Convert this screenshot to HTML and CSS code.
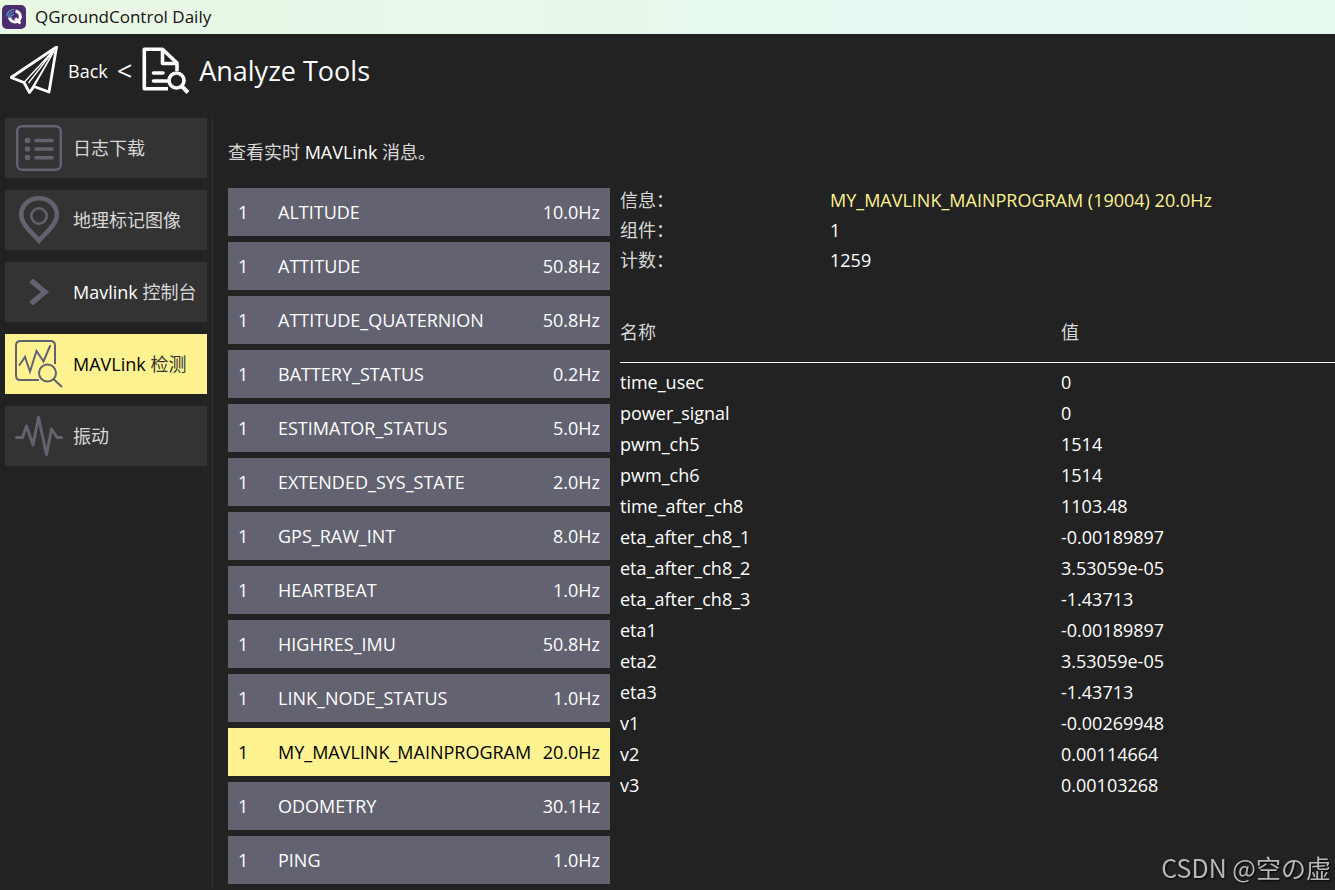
FILE: index.html
```
<!DOCTYPE html>
<html lang="zh-CN">
<head>
<meta charset="utf-8">
<title>QGroundControl Daily</title>
<link rel="stylesheet" href="styles.css">
</head>
<body>
<div class="titlebar">
  <svg class="app-logo" viewBox="0 0 24 24" aria-hidden="true">
    <rect width="24" height="24" rx="5" fill="#4c2d6d"/>
    <path d="M13.500 6.200A5.400 5.400 0 1 1 7.600 12.500" fill="none" stroke="#fff" stroke-width="3.200"/>
    <path d="M13.200 13.200l5.200 5.200" stroke="#fff" stroke-width="2.800"/>
    <path d="M4.500 11.500A7.500 7.500 0 0 1 12 4.500M6.700 12A5 5 0 0 1 12 7M8.800 12.500A3 3 0 0 1 12 9.500" fill="none" stroke="#4da3d6" stroke-width="1.200"/>
  </svg>
  <span>QGroundControl Daily</span>
</div>
<header class="toolbar">
  <button class="back" type="button">
    <svg class="plane" viewBox="0 0 50 50" aria-hidden="true">
      <path d="M46.500 1L1 31.500L14 36.500L19.500 46.500L24 40.500L39 46L46.500 1Z" fill="none" stroke="#fff" stroke-width="2.800" stroke-linejoin="round"/>
      <path d="M46.500 1L14 36.500M46.500 1L19.500 46M46.500 1L24 40.500M46.500 1L18.500 37" fill="none" stroke="#fff" stroke-width="1.300"/>
    </svg>
    <span>Back</span>
  </button>
  <span class="chevron">&lt;</span>
  <svg class="doc" viewBox="0 0 48 48" aria-hidden="true">
    <g fill="none" stroke="#fff" stroke-width="3.600" stroke-linejoin="round">
      <path d="M26 41.700H2.300V2.300H20.500L35 16V24M20.500 2.300V16.500H34"/>
      <path d="M11.500 26H21M11.500 34H25" stroke-linecap="round"/>
      <circle cx="34.500" cy="33.500" r="7.500"/>
      <path d="M39.500 39L46 45.500" stroke-width="4"/>
    </g>
  </svg>
  <h1>Analyze Tools</h1>
</header>
<div class="workspace">
  <nav class="sidebar">
    <button class="tool" type="button">
      <svg viewBox="0 0 48 48" aria-hidden="true">
        <rect x="2.200" y="2.200" width="43.600" height="43.600" rx="5" fill="none" stroke="currentColor" stroke-width="2.400"/>
        <path d="M19.500 16.500H38.500M19.500 25H38.500M19.500 33.700H38.500" stroke="currentColor" stroke-width="3.600"/>
        <g fill="currentColor"><circle cx="12.500" cy="16.500" r="2.800"/><circle cx="12.500" cy="25" r="2.800"/><circle cx="12.500" cy="33.500" r="2.800"/></g>
      </svg>
      <span class="han">日志下载</span>
    </button>
    <button class="tool" type="button">
      <svg viewBox="0 0 48 48" aria-hidden="true">
        <path d="M24 44.500C19 38.500 6.200 29 6.200 18.500A17.800 16.200 0 0 1 41.800 18.500C41.800 29 29 38.500 24 44.500Z" fill="none" stroke="currentColor" stroke-width="4.600"/>
        <circle cx="24" cy="20" r="7.700" fill="none" stroke="currentColor" stroke-width="2.600"/>
      </svg>
      <span class="han">地理标记图像</span>
    </button>
    <button class="tool" type="button">
      <svg viewBox="0 0 48 48" aria-hidden="true">
        <path d="M16 12.500L30 24L16 35.500" fill="none" stroke="currentColor" stroke-width="5.200"/>
      </svg>
      <span>Mavlink <span class="han">控制台</span></span>
    </button>
    <button class="tool active" type="button" aria-current="page">
      <svg viewBox="0 0 48 48" aria-hidden="true">
        <g fill="none" stroke="currentColor" stroke-width="2">
          <path d="M40 24V5.500Q40 1 35.500 1H5.500Q1 1 1 5.500V35.500Q1 40 5.500 40H24"/>
          <path d="M4.500 25L10 17L15 31.500L21.500 11L28.500 21.500L35 6" stroke-linecap="round"/>
          <circle cx="32.500" cy="33" r="8.500"/>
          <path d="M38.500 39L47 47"/>
        </g>
      </svg>
      <span>MAVLink <span class="han">检测</span></span>
    </button>
    <button class="tool" type="button">
      <svg viewBox="0 0 48 48" aria-hidden="true">
        <path d="M1.500 25.500H7.500L11.500 14L18 33L23.500 5.500L31.500 42.500L36.500 17L42 25.500H46.500" fill="none" stroke="currentColor" stroke-width="3" stroke-linecap="round" stroke-linejoin="round"/>
      </svg>
      <span class="han">振动</span>
    </button>
  </nav>
  <main class="inspector">
    <p class="intro"><span class="han">查看实时</span> MAVLink <span class="han">消息。</span></p>
    <div class="panes">
      <div class="messages">
        <button class="message" type="button"><span>1</span><span>ALTITUDE</span><span>10.0Hz</span></button>
        <button class="message" type="button"><span>1</span><span>ATTITUDE</span><span>50.8Hz</span></button>
        <button class="message" type="button"><span>1</span><span>ATTITUDE_QUATERNION</span><span>50.8Hz</span></button>
        <button class="message" type="button"><span>1</span><span>BATTERY_STATUS</span><span>0.2Hz</span></button>
        <button class="message" type="button"><span>1</span><span>ESTIMATOR_STATUS</span><span>5.0Hz</span></button>
        <button class="message" type="button"><span>1</span><span>EXTENDED_SYS_STATE</span><span>2.0Hz</span></button>
        <button class="message" type="button"><span>1</span><span>GPS_RAW_INT</span><span>8.0Hz</span></button>
        <button class="message" type="button"><span>1</span><span>HEARTBEAT</span><span>1.0Hz</span></button>
        <button class="message" type="button"><span>1</span><span>HIGHRES_IMU</span><span>50.8Hz</span></button>
        <button class="message" type="button"><span>1</span><span>LINK_NODE_STATUS</span><span>1.0Hz</span></button>
        <button class="message active" type="button"><span>1</span><span>MY_MAVLINK_MAINPROGRAM</span><span>20.0Hz</span></button>
        <button class="message" type="button"><span>1</span><span>ODOMETRY</span><span>30.1Hz</span></button>
        <button class="message" type="button"><span>1</span><span>PING</span><span>1.0Hz</span></button>
      </div>
      <section class="details">
        <dl class="summary">
          <dt class="han">信息：</dt><dd class="highlight">MY_MAVLINK_MAINPROGRAM (19004) 20.0Hz</dd>
          <dt class="han">组件：</dt><dd>1</dd>
          <dt class="han">计数：</dt><dd>1259</dd>
        </dl>
        <table class="fields">
          <thead><tr><th class="han" scope="col">名称</th><th class="han" scope="col">值</th></tr></thead>
          <tbody>
            <tr><td>time_usec</td><td>0</td></tr>
            <tr><td>power_signal</td><td>0</td></tr>
            <tr><td>pwm_ch5</td><td>1514</td></tr>
            <tr><td>pwm_ch6</td><td>1514</td></tr>
            <tr><td>time_after_ch8</td><td>1103.48</td></tr>
            <tr><td>eta_after_ch8_1</td><td>-0.00189897</td></tr>
            <tr><td>eta_after_ch8_2</td><td>3.53059e-05</td></tr>
            <tr><td>eta_after_ch8_3</td><td>-1.43713</td></tr>
            <tr><td>eta1</td><td>-0.00189897</td></tr>
            <tr><td>eta2</td><td>3.53059e-05</td></tr>
            <tr><td>eta3</td><td>-1.43713</td></tr>
            <tr><td>v1</td><td>-0.00269948</td></tr>
            <tr><td>v2</td><td>0.00114664</td></tr>
            <tr><td>v3</td><td>0.00103268</td></tr>
          </tbody>
        </table>
      </section>
    </div>
  </main>
</div>
<div class="watermark">CSDN @空の虚</div>
</body>
</html>
```
FILE: styles.css
```
* {
  box-sizing: border-box;
}

body {
  margin: 0;
  min-height: 100vh;
  display: flex;
  flex-direction: column;
  background: #222;
  color: #fff;
  font: 18px/24px "Open Sans", "Noto Sans CJK SC", sans-serif;
}

button {
  border: 0;
  padding: 0;
  background: none;
  color: inherit;
  font: inherit;
  text-align: left;
  cursor: pointer;
}

.titlebar {
  display: flex;
  align-items: center;
  gap: 9px;
  height: 34px;
  padding-left: 2px;
  background: linear-gradient(90deg, #e9f8e4, #e7f8ec 52%, #e7f8f3 75%, #e7f8ee);
  color: #111;
  font-size: 17px;
}

.app-logo {
  width: 24px;
  height: 24px;
}

.toolbar {
  display: flex;
  align-items: center;
  height: 74px;
  padding: 0 10px;
}

.back {
  display: flex;
  align-items: center;
  gap: 8px;
}

.plane {
  width: 50px;
  height: 50px;
}

.chevron {
  margin: 0 10px 0 9px;
  font-size: 27px;
}

.doc {
  width: 48px;
  height: 48px;
}

.toolbar h1 {
  margin: 0 0 0 9px;
  font-size: 27px;
  line-height: 36px;
  font-weight: 400;
}

.workspace {
  flex: 1;
  display: flex;
  padding: 10px 0 2px 5px;
}

.sidebar {
  flex: none;
  display: flex;
  flex-direction: column;
  gap: 12px;
  width: 208px;
  padding-right: 5px;
  border-right: 1px solid #333;
}

.tool {
  display: flex;
  align-items: center;
  gap: 10px;
  height: 60px;
  padding-left: 10px;
  background: #333;
  white-space: nowrap;
}

.tool svg {
  width: 48px;
  height: 48px;
  color: #626270;
}

.han {
  color: #d8d8d8;
}

.tool.active,
.message.active {
  background: #fff291;
  color: #000;
}

.active .han {
  color: #333;
}

.inspector {
  flex: 1;
  min-width: 0;
  padding: 22px 0 0 15px;
}

.intro {
  margin: 0 0 24px;
}

.panes {
  display: flex;
  gap: 10px;
}

.messages {
  flex: none;
  display: flex;
  flex-direction: column;
  gap: 6px;
  width: 382px;
}

.message {
  display: grid;
  grid-template-columns: 40px 1fr auto;
  align-items: center;
  height: 48px;
  padding: 0 10px;
  background: #626270;
}

.details {
  flex: 1;
  min-width: 0;
}

.summary {
  display: grid;
  grid-template-columns: 210px 1fr;
  margin: -3px 0 44px;
  line-height: 30px;
}

.summary dd {
  margin: 0;
}

.highlight {
  color: #fff291;
}

.fields {
  width: 100%;
  table-layout: fixed;
  border-collapse: collapse;
}

.fields th,
.fields td {
  height: 31px;
  padding: 0;
  font-weight: 400;
  text-align: left;
}

.fields th {
  height: 43px;
  padding-bottom: 16px;
  border-bottom: 1px solid #fff;
}

.fields th:first-child {
  width: 441px;
}

.fields tbody::before {
  content: "";
  display: block;
  height: 4px;
}

.watermark {
  position: fixed;
  right: 4px;
  bottom: 5px;
  color: #b8b8b8;
  font: 25px/36px "Noto Sans CJK SC", sans-serif;
  text-shadow: 1px 1px 2px #000;
}
```
